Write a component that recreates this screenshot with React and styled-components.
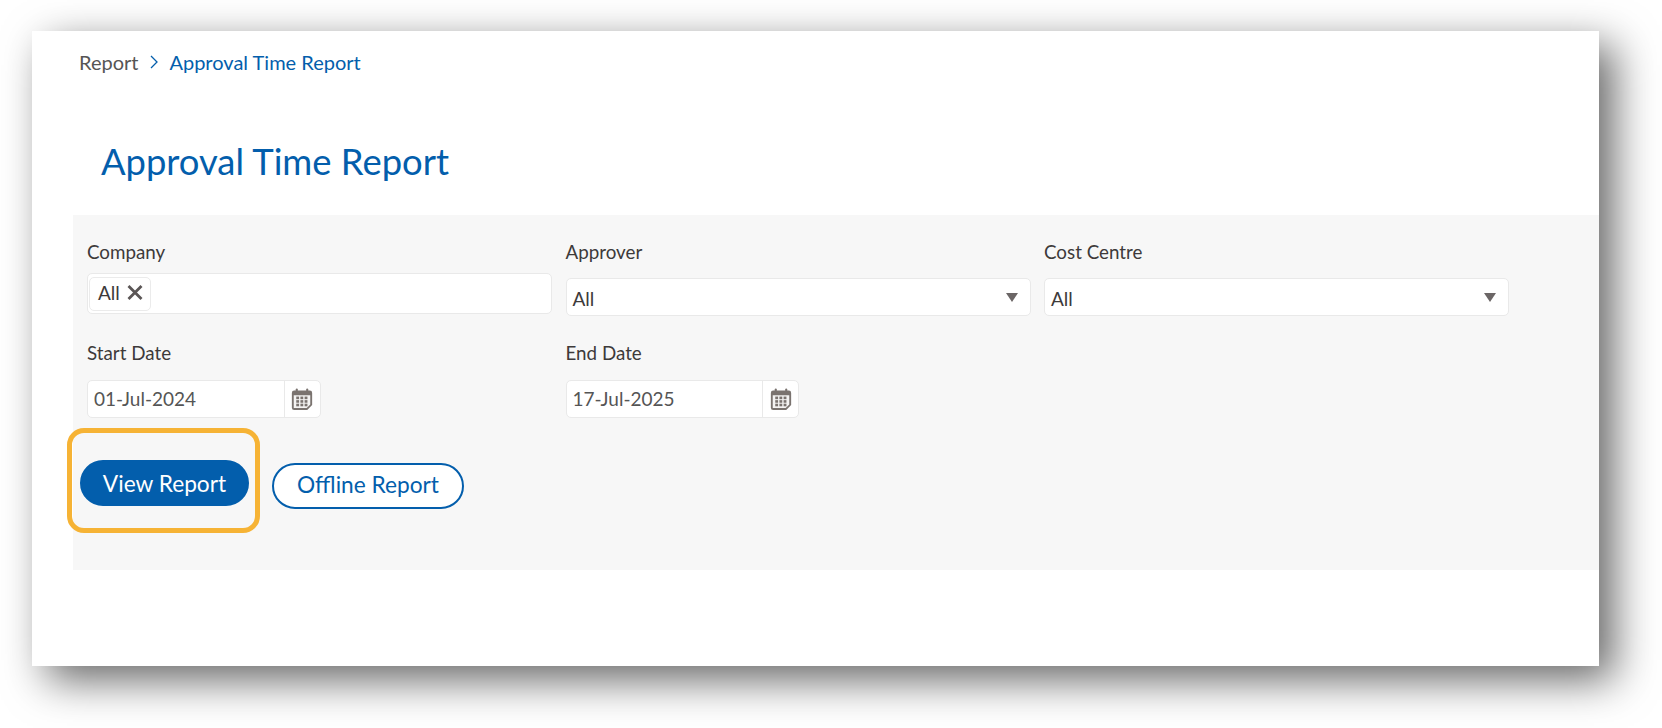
import React from "react";
import styled, { createGlobalStyle } from "styled-components";

const GlobalStyle = createGlobalStyle`
  html, body {
    margin: 0;
    background: #fff;
    font-family: Lato, "Open Sans", sans-serif;
  }
  * {
    box-sizing: border-box;
  }
`;

const Page = styled.div`
  width: 1662px;
  height: 728px;
  padding: 31px 63px 62px 32px;
  overflow: hidden;
`;

const Card = styled.div`
  height: 635px;
  background: #fff;
  box-shadow: 15px 14px 40px rgba(0, 0, 0, 0.6);
  display: flex;
  flex-direction: column;
`;

const Breadcrumb = styled.nav`
  display: flex;
  align-items: center;
  height: 24px;
  margin: 19px 0 0 47px;
  font-size: 20px;
  color: #555;
`;

const Crumb = styled.span`
  color: ${(p) => (p.$active ? "#035eac" : "#555")};
`;

const Chevron = styled.svg`
  width: 12px;
  height: 16px;
  margin: 0 9px 0 10px;
`;

const Title = styled.h1`
  margin: 61px 0 0 69px;
  height: 52px;
  font-size: 36.4px;
  line-height: 52px;
  font-weight: 400;
  color: #035eac;
`;

const Panel = styled.section`
  margin: 28px 0 0 41px;
  height: 355px;
  padding: 25px 14px 0;
  background: #f7f7f7;
`;

const Row = styled.div`
  display: grid;
  grid-template-columns: repeat(3, 465px);
  column-gap: 13.5px;
  margin-bottom: ${(p) => p.$gap || 0}px;
`;

const Field = styled.div`
  display: flex;
  flex-direction: column;
`;

const Label = styled.label`
  height: 24px;
  line-height: 23px;
  font-size: 18.8px;
  color: #3d3a3a;
`;

const Control = styled.div`
  display: flex;
  align-items: center;
  background: #fff;
  border: 1px solid #e9e9e9;
  border-radius: 5px;
`;

const MultiSelect = styled(Control)`
  height: 41px;
  margin-top: 9px;
  padding-left: 1px;
`;

const Chip = styled.span`
  display: flex;
  align-items: center;
  gap: 7px;
  height: 34px;
  width: 62px;
  padding: 0 0 2px 8px;
  border: 1px solid #ebebeb;
  border-radius: 5px;
  font-size: 19px;
  color: #3d3a3a;
`;

const Select = styled(Control)`
  height: 38px;
  margin-top: 14px;
  padding: 2px 12px 0 6px;
  justify-content: space-between;
  font-size: 19px;
  color: #3d3a3a;
`;

const Caret = styled.span`
  width: 0;
  height: 0;
  margin-top: -1px;
  border-left: 6px solid transparent;
  border-right: 6px solid transparent;
  border-top: 9px solid #6b6666;
`;

const DateBox = styled(Control)`
  width: 233.5px;
  height: 38px;
  margin-top: 15px;
  font-size: 19px;
  color: #555;
`;

const DateValue = styled.span`
  flex: 1;
  padding: 0 0 2px 6px;
`;

const DateButton = styled.span`
  width: 36px;
  height: 100%;
  display: flex;
  align-items: center;
  justify-content: center;
  border-left: 1px solid #e9e9e9;
`;

const Actions = styled.div`
  display: flex;
  align-items: flex-start;
  margin-left: -7px;
  gap: 23px;
`;

const Highlighted = styled.span`
  position: relative;
  display: block;
`;

const Highlight = styled.span`
  position: absolute;
  top: -32px;
  left: -13px;
  right: -11px;
  bottom: -27px;
  border: 5px solid #f6b335;
  border-radius: 17px;
  pointer-events: none;
`;

const Button = styled.button`
  height: 46px;
  width: ${(p) => p.$width}px;
  margin-top: ${(p) => (p.$primary ? 0 : 3)}px;
  padding: 0 0 ${(p) => (p.$primary ? 0 : 3)}px;
  border: 2px solid #035eac;
  border-radius: 23px;
  background: ${(p) => (p.$primary ? "#035eac" : "#fff")};
  color: ${(p) => (p.$primary ? "#fff" : "#035eac")};
  font-family: inherit;
  font-size: 22.7px;
`;

const CalendarIcon = () => (
  <svg width="22" height="23" viewBox="0 0 21 22">
    <path
      d="M3 2.5h15a2.2 2.2 0 0 1 2.2 2.2v11.6L15.5 21H3a2.2 2.2 0 0 1-2.2-2.2V4.700A2.2 2.2 0 0 1 3 2.500z"
      fill="#7a736f"
    />
    <path d="M2.600 7h15.800v8.800l-3.400 3.400H2.600z" fill="#f4f3f2" />
    <rect x="4.500" y="0.500" width="2" height="4" rx="1" fill="#7a736f" />
    <rect x="14.500" y="0.500" width="2" height="4" rx="1" fill="#7a736f" />
    {[8.2, 11.6, 15].map((y) =>
      [5, 9, 13].map((x) => (
        <rect key={`${x}-${y}`} x={x} y={y} width="2.700" height="2.500" fill="#7a736f" />
      ))
    )}
  </svg>
);

const CloseIcon = () => (
  <svg width="16" height="15" viewBox="0 0 16 15">
    <path d="M1.500 1l13 13M14.500 1l-13 13" stroke="#5a5555" strokeWidth="2.800" fill="none" />
  </svg>
);

const App = () => {
  return (
    <Page>
      <GlobalStyle />
      <Card>
        <Breadcrumb>
          <Crumb>Report</Crumb>
          <Chevron viewBox="0 0 12 16">
            <path d="M3 2l6 6-6 6" stroke="#035eac" strokeWidth="1.300" fill="none" />
          </Chevron>
          <Crumb $active>Approval Time Report</Crumb>
        </Breadcrumb>
        <Title>Approval Time Report</Title>
        <Panel>
          <Row $gap={25}>
            <Field>
              <Label>Company</Label>
              <MultiSelect>
                <Chip>
                  All
                  <CloseIcon />
                </Chip>
              </MultiSelect>
            </Field>
            <Field>
              <Label>Approver</Label>
              <Select>
                All
                <Caret />
              </Select>
            </Field>
            <Field>
              <Label>Cost Centre</Label>
              <Select>
                All
                <Caret />
              </Select>
            </Field>
          </Row>
          <Row $gap={42}>
            <Field>
              <Label>Start Date</Label>
              <DateBox>
                <DateValue>01-Jul-2024</DateValue>
                <DateButton>
                  <CalendarIcon />
                </DateButton>
              </DateBox>
            </Field>
            <Field>
              <Label>End Date</Label>
              <DateBox>
                <DateValue>17-Jul-2025</DateValue>
                <DateButton>
                  <CalendarIcon />
                </DateButton>
              </DateBox>
            </Field>
          </Row>
          <Actions>
            <Highlighted>
              <Button $primary $width={169}>View Report</Button>
              <Highlight />
            </Highlighted>
            <Button $width={192}>Offline Report</Button>
          </Actions>
        </Panel>
      </Card>
    </Page>
  );
};

export default App;
